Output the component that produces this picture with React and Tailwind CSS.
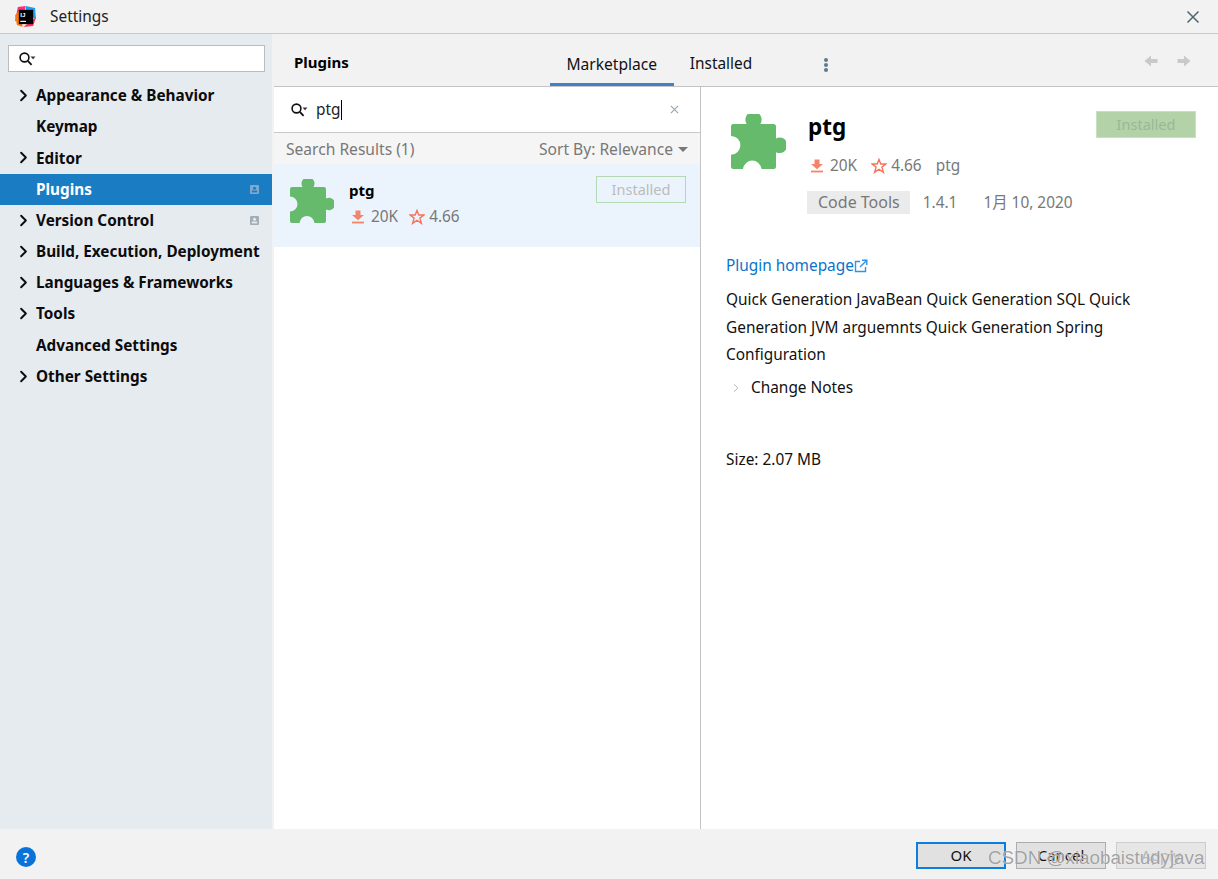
import React from "react";
import { ChevronRight } from "lucide-react";

const navItems = [
  { label: "Appearance & Behavior", arrow: true },
  { label: "Keymap" },
  { label: "Editor", arrow: true },
  { label: "Plugins", active: true, badge: true },
  { label: "Version Control", arrow: true, badge: true },
  { label: "Build, Execution, Deployment", arrow: true },
  { label: "Languages & Frameworks", arrow: true },
  { label: "Tools", arrow: true },
  { label: "Advanced Settings" },
  { label: "Other Settings", arrow: true },
];

// green puzzle piece used in the list and in the detail panel
const PuzzleIcon = ({ className }) => (
  <svg viewBox="0 0 44 44" className={className}>
    <path
      fill="#65BA6C"
      d="M2 8H12.5A6.5 6.5 0 1 1 23.5 8H34A2 2 0 0 1 36 10V19.5A6.2 6.2 0 1 1 36 30.5V42A2 2 0 0 1 34 44H24.5A7.8 9.5 0 0 0 9.5 44H2A2 2 0 0 1 0 42V32.5A7.5 7.5 0 0 0 0 17.5V10A2 2 0 0 1 2 8Z"
    />
  </svg>
);

const SearchIcon = () => (
  <svg viewBox="0 0 20 16" className="w-5 h-4">
    <circle cx="6.5" cy="6.5" r="4.4" fill="none" stroke="#111" strokeWidth="1.6" />
    <path d="M9.8 9.8L13.6 13.8" stroke="#111" strokeWidth="1.8" fill="none" />
    <path d="M12.5 5.5H17.5L15 8.2Z" fill="#333" />
  </svg>
);

const DownloadIcon = () => (
  <svg viewBox="0 0 14 14" className="w-3.5 h-3.5">
    <path d="M4.5 0.5H9.5V5H13L7 10.2L1 5H4.5Z" fill="#F5846B" />
    <rect x="1" y="11.6" width="12" height="1.8" fill="#F5846B" />
  </svg>
);

const StarIcon = () => (
  <svg viewBox="0 0 16 16" className="w-4 h-4">
    <path
      d="M8 1.4L9.8 6H15L10.9 9.1L12.4 14.4L8 11.3L3.6 14.4L5.1 9.1L1 6H6.2Z"
      fill="none"
      stroke="#F5735A"
      strokeWidth="1.4"
    />
  </svg>
);

// little profile badge at the right of some settings rows
const BadgeIcon = ({ color, hole }) => (
  <svg viewBox="0 0 10 10" className="ml-auto w-[9px] h-[9px]">
    <rect width="10" height="10" rx="1.2" fill={color} />
    <circle cx="5" cy="3.6" r="1.7" fill={hole} />
    <rect x="2" y="6.2" width="6" height="2" fill={hole} />
  </svg>
);

const AppLogo = () => (
  <svg viewBox="0 0 22 22" className="w-[21px] h-[21px]">
    <path d="M3 1L11 0L9 12L0 16Z" fill="#FC2F7A" />
    <path d="M11 0L21 2L22 14L12 10Z" fill="#1E9CF0" />
    <path d="M0 10L5 4L8 22L2 20Z" fill="#F97A12" />
    <path d="M16 16L22 12L19 21L9 22Z" fill="#FE315D" />
    <rect x="4" y="4" width="15" height="15" fill="#000" />
    <text x="5.5" y="11" fontSize="6.5" fontWeight="700" fill="#fff" fontFamily="'Liberation Sans', sans-serif">
      IJ
    </text>
    <rect x="5.5" y="15.5" width="6" height="1.2" fill="#fff" />
  </svg>
);

const Stats = () => (
  <>
    <span className="flex items-center gap-[6px]">
      <DownloadIcon />
      20K
    </span>
    <span className="flex items-center gap-[4px]">
      <StarIcon />
      4.66
    </span>
  </>
);

const App = () => {
  return (
    <div
      className="relative w-[1218px] h-[879px] flex flex-col overflow-hidden bg-[#f2f2f2] text-[15.4px] text-black"
      style={{ fontFamily: "'Noto Sans', 'Noto Sans CJK SC', sans-serif" }}
    >
      {/* Title bar */}
      <div className="h-[34px] shrink-0 flex items-center border-b border-[#c9c9c9] pl-[15px] pr-[18px]">
        <AppLogo />
        <span className="ml-[14px] text-[#222]">Settings</span>
        <svg viewBox="0 0 14 14" className="w-[14px] h-[14px] ml-auto">
          <path d="M1.5 1.5L12.5 12.5M12.5 1.5L1.5 12.5" stroke="#4f6470" strokeWidth="1.5" />
        </svg>
      </div>

      <div className="flex-1 flex min-h-0">
        {/* Sidebar */}
        <aside className="w-[272px] shrink-0 bg-[#e6ebf0] flex flex-col">
          <div className="mt-[11px] mx-[8px] w-[257px] h-[27px] bg-white border border-[#bcbcbc] flex items-center pl-[9px]">
            <SearchIcon />
          </div>
          <nav className="mt-[8px] flex flex-col font-bold text-[15.3px]">
            {navItems.map((item) => (
              <div
                key={item.label}
                className={
                  item.active
                    ? "h-[31.2px] flex items-center pl-[36px] pr-[13px] bg-[#1a7dc4] text-white relative"
                    : "h-[31.2px] flex items-center pl-[36px] pr-[13px] relative text-[#0c0c0c]"
                }
              >
                {item.arrow && (
                  <ChevronRight className="absolute left-[14px] w-[19px] h-[19px]" strokeWidth={2.4} />
                )}
                <span className="whitespace-nowrap">{item.label}</span>
                {item.badge &&
                  (item.active ? (
                    <BadgeIcon color="#7fa9cc" hole="#1a7dc4" />
                  ) : (
                    <BadgeIcon color="#a3adb5" hole="#e6ebf0" />
                  ))}
              </div>
            ))}
          </nav>
        </aside>

        {/* Main */}
        <main className="flex-1 min-w-0 flex flex-col pl-[2px]">
          <header className="h-[53px] shrink-0 flex border-b border-[#c4c4c4] relative">
            <span className="ml-[20px] mt-[18px] font-bold text-[15px] leading-5">Plugins</span>
            <div className="ml-[201px] w-[124px] h-[52px] border-b-[3px] border-[#3f83c5] flex justify-center pt-[20px] leading-5 text-[15.6px] text-[#111]">
              Marketplace
            </div>
            <div className="ml-[16px] mt-[20px] leading-5 text-[#111]">Installed</div>
            <div className="ml-[72px] mt-[24px] flex flex-col gap-[1.5px]">
              <span className="w-[3.5px] h-[3.5px] rounded-full bg-[#5f7a8c]" />
              <span className="w-[3.5px] h-[3.5px] rounded-full bg-[#5f7a8c]" />
              <span className="w-[3.5px] h-[3.5px] rounded-full bg-[#5f7a8c]" />
            </div>
            <div className="ml-auto mr-[27px] mt-[20px] flex gap-[19px] h-[14px]">
              <svg viewBox="0 0 14 14" className="w-[14px] h-[14px]">
                <path d="M0.5 7L7 1.5V5H13.5V9H7V12.5Z" fill="#c9c9c9" />
              </svg>
              <svg viewBox="0 0 14 14" className="w-[14px] h-[14px]">
                <path d="M13.5 7L7 1.5V5H0.5V9H7V12.5Z" fill="#c9c9c9" />
              </svg>
            </div>
          </header>

          <div className="flex-1 flex min-h-0 bg-white">
            {/* Results list */}
            <section className="w-[427px] shrink-0 border-r border-[#c4c4c4] flex flex-col">
              <div className="h-[46px] shrink-0 flex items-center border-b border-[#c9c9c9] pl-[16px] pr-[21px]">
                <SearchIcon />
                <span className="ml-[6px] text-[#222]">ptg</span>
                <span className="w-px h-[20px] bg-black" />
                <svg viewBox="0 0 10 10" className="w-[9px] h-[9px] ml-auto">
                  <path d="M1 1L9 9M9 1L1 9" stroke="#9aa7b0" strokeWidth="1.3" />
                </svg>
              </div>
              <div className="h-[31px] shrink-0 bg-[#f5f5f5] flex items-center justify-between pl-[12px] pr-[12px] pt-[3px] text-[15.6px] text-[#787878]">
                <span>Search Results (1)</span>
                <span className="flex items-center gap-[5px]">
                  Sort By: Relevance
                  <span className="w-0 h-0 border-x-[5px] border-x-transparent border-t-[5px] border-t-[#787878]" />
                </span>
              </div>
              <div className="h-[83px] shrink-0 bg-[#ebf4fd] flex pl-[16px] pr-[14px] pt-[15px]">
                <PuzzleIcon className="w-[44px] h-[44px]" />
                <div className="ml-[15px]">
                  <div className="font-bold leading-5 mt-[1px] text-[15px]">ptg</div>
                  <div className="mt-[7px] ml-[2px] flex items-center gap-[11px] text-[#787878] leading-5">
                    <Stats />
                  </div>
                </div>
                <div className="ml-auto -mt-[3px] w-[90px] h-[27px] border border-[#b4d8b4] flex items-center justify-center text-[14.5px] text-[#bbbbbb]">
                  Installed
                </div>
              </div>
            </section>

            {/* Plugin details */}
            <section className="flex-1 min-w-0 pl-[25px] pr-[22px] pt-[24px]">
              <div className="flex">
                <PuzzleIcon className="ml-[5px] mt-[3px] w-[55px] h-[55px] shrink-0" />
                <div className="ml-[22px]">
                  <div className="font-bold text-[22.5px] leading-[32px]">ptg</div>
                  <div className="mt-[13px] flex items-center gap-[14px] text-[#787878] leading-5 ml-[2px]">
                    <Stats />
                    <span>ptg</span>
                  </div>
                  <div className="mt-[15px] -ml-[1px] flex items-center text-[#787878] leading-[23px]">
                    <span className="bg-[#ebebeb] pl-[11px] pr-[10px] h-[23px] text-[16px]">Code Tools</span>
                    <span className="ml-[13px]">1.4.1</span>
                    <span className="ml-[26px]">1月 10, 2020</span>
                  </div>
                </div>
                <div className="ml-auto w-[100px] h-[27px] bg-[#b3d2a8] border border-[#c9e0c0] flex items-center justify-center text-[14.5px] text-[#9ab898]">
                  Installed
                </div>
              </div>

              <div className="mt-[42px] flex items-center text-[#0a73c9] leading-5">
                Plugin homepage
                <svg viewBox="0 0 14 14" className="w-[14px] h-[14px]">
                  <path d="M11.5 8V12.5H1.5V2.5H6" fill="none" stroke="#2f93e6" strokeWidth="1.4" />
                  <path d="M8 1.2H12.8V6M12.6 1.4L6 8" fill="none" stroke="#2f93e6" strokeWidth="1.4" />
                </svg>
              </div>
              <p className="mt-[10px] leading-[27.5px] text-[#111] w-[420px]">
                Quick Generation JavaBean Quick Generation SQL Quick Generation JVM arguemnts Quick Generation Spring Configuration
              </p>
              <div className="mt-[9px] flex items-center leading-5 text-[#111]">
                <ChevronRight className="w-[14px] h-[14px] text-[#a8a8a8] ml-[3px]" strokeWidth={1.5} />
                <span className="ml-[8px]">Change Notes</span>
              </div>
              <div className="mt-[52px] leading-5 text-[#111]">Size: 2.07 MB</div>
            </section>
          </div>
        </main>
      </div>

      {/* Footer */}
      <footer className="h-[50px] shrink-0 flex items-center pl-[16px] pr-[12px] bg-[#f2f2f2]">
        <span className="mt-[6px] w-5 h-5 rounded-full bg-[#0a73d9] text-white flex items-center justify-center text-[14px] font-semibold">
          ?
        </span>
        <div className="ml-auto mt-[3px] flex gap-[10px] text-[15px]">
          <button className="w-[90px] h-[27px] border-2 border-[#0a7fe0] bg-[#e1e1e1] text-[#111]">OK</button>
          <button className="w-[90px] h-[27px] border border-[#adadad] bg-[#e1e1e1] text-[#111]">Cancel</button>
          <button className="w-[90px] h-[27px] border border-[#cccccc] bg-[#e6e6e6] text-[#b5b5b5]">Apply</button>
        </div>
      </footer>

      {/* CSDN watermark over the buttons */}
      <div className="absolute left-[988px] top-[846px] text-[18.8px] leading-6 text-[#8a8a8a]/80 whitespace-nowrap [font-family:'Liberation_Sans',sans-serif] [text-shadow:0_0_1px_#fff]">
        CSDN @xiaobaistudyjava
      </div>
    </div>
  );
};

export default App;
